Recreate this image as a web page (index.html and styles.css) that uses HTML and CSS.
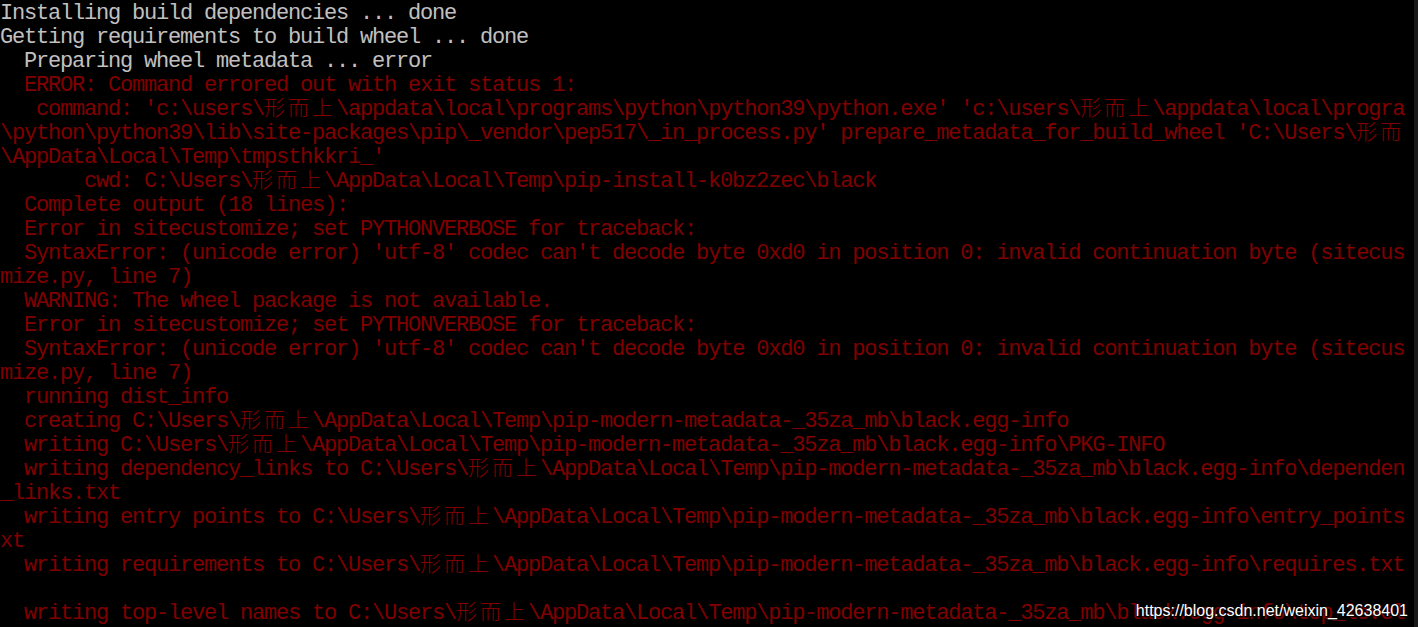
FILE: index.html
```html
<!DOCTYPE html>
<html lang="zh">
<head>
<meta charset="utf-8">
<title>pip install black - error</title>
<link rel="stylesheet" href="styles.css">
</head>
<body>
<div class="screen">
  <div class="console">
    <div class="line std">Installing build dependencies ... done</div>
    <div class="line std">Getting requirements to build wheel ... done</div>
    <div class="line std">  Preparing wheel metadata ... error</div>
    <div class="line err">  ERROR: Command errored out with exit status 1:</div>
    <div class="line err">   command: 'c:\users\<span class="cjk">形而上</span>\appdata\local\programs\python\python39\python.exe' 'c:\users\<span class="cjk">形而上</span>\appdata\local\progra</div>
    <div class="line err">\python\python39\lib\site-packages\pip\_vendor\pep517\_in_process.py' prepare_metadata_for_build_wheel 'C:\Users\<span class="cjk">形而</span></div>
    <div class="line err">\AppData\Local\Temp\tmpsthkkri_'</div>
    <div class="line err">       cwd: C:\Users\<span class="cjk">形而上</span>\AppData\Local\Temp\pip-install-k0bz2zec\black</div>
    <div class="line err">  Complete output (18 lines):</div>
    <div class="line err">  Error in sitecustomize; set PYTHONVERBOSE for traceback:</div>
    <div class="line err">  SyntaxError: (unicode error) 'utf-8' codec can't decode byte 0xd0 in position 0: invalid continuation byte (sitecus</div>
    <div class="line err">mize.py, line 7)</div>
    <div class="line err">  WARNING: The wheel package is not available.</div>
    <div class="line err">  Error in sitecustomize; set PYTHONVERBOSE for traceback:</div>
    <div class="line err">  SyntaxError: (unicode error) 'utf-8' codec can't decode byte 0xd0 in position 0: invalid continuation byte (sitecus</div>
    <div class="line err">mize.py, line 7)</div>
    <div class="line err">  running dist_info</div>
    <div class="line err">  creating C:\Users\<span class="cjk">形而上</span>\AppData\Local\Temp\pip-modern-metadata-_35za_mb\black.egg-info</div>
    <div class="line err">  writing C:\Users\<span class="cjk">形而上</span>\AppData\Local\Temp\pip-modern-metadata-_35za_mb\black.egg-info\PKG-INFO</div>
    <div class="line err">  writing dependency_links to C:\Users\<span class="cjk">形而上</span>\AppData\Local\Temp\pip-modern-metadata-_35za_mb\black.egg-info\dependen</div>
    <div class="line err">_links.txt</div>
    <div class="line err">  writing entry points to C:\Users\<span class="cjk">形而上</span>\AppData\Local\Temp\pip-modern-metadata-_35za_mb\black.egg-info\entry_points</div>
    <div class="line err">xt</div>
    <div class="line err">  writing requirements to C:\Users\<span class="cjk">形而上</span>\AppData\Local\Temp\pip-modern-metadata-_35za_mb\black.egg-info\requires.txt</div>
    <div class="line err"> </div>
    <div class="line err">  writing top-level names to C:\Users\<span class="cjk">形而上</span>\AppData\Local\Temp\pip-modern-metadata-_35za_mb\black.egg-info\top_level</div>
  </div>
  <div class="scrollbar"></div>
  <div class="watermark">https://blog.csdn.net/weixin_42638401</div>
</div>
</body>
</html>
```

FILE: styles.css
```css
html, body {
  margin: 0;
  padding: 0;
  background: #000;
  overflow: hidden;
}

.screen {
  position: relative;
  display: flex;
  width: 1418px;
  height: 627px;
  overflow: hidden;
  background: #000;
}

.console {
  flex: 1;
  display: flex;
  flex-direction: column;
  overflow: hidden;
  font-family: "Liberation Mono", "DejaVu Sans Mono", monospace;
  font-size: 22px;
  letter-spacing: -1.2px;
}

.line {
  height: 24px;
  line-height: 28px;
  white-space: pre;
  flex-shrink: 0;
  overflow: visible;
}

.std {
  color: #c0c0c0;
}

.err {
  color: #800000;
}

.cjk {
  font-family: "Noto Sans CJK SC", "Noto Sans CJK JP", sans-serif;
  font-size: 21px;
  letter-spacing: 3px;
  line-height: 0;
  font-weight: 300;
}

.scrollbar {
  width: 4px;
  flex-shrink: 0;
  background: #1a1a1a;
}

.watermark {
  position: absolute;
  right: 10px;
  bottom: 7px;
  font-family: "Liberation Sans", Arial, sans-serif;
  font-size: 16px;
  color: #ffffff;
  text-shadow: 0 0 2px #000, 1px 1px 1px #000;
  letter-spacing: 0;
}
```
